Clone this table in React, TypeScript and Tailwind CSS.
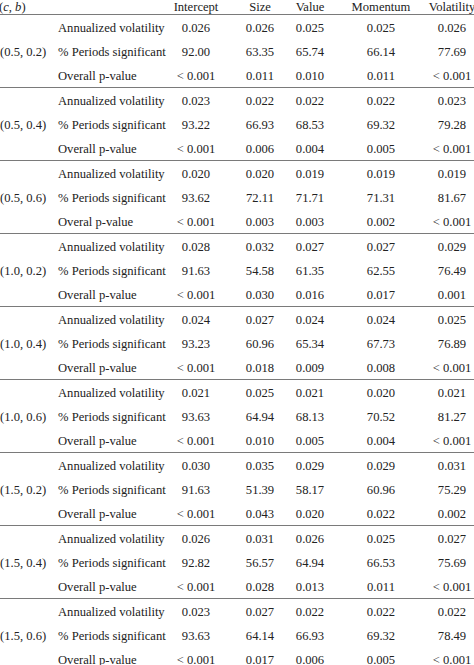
const cols = ['Intercept', 'Size', 'Value', 'Momentum', 'Volatility']

// widths chosen so each column's centre lines up with the printed table
const cellW = ['w-[52px]', 'w-[76px]', 'w-[24px]', 'w-[118px]', 'w-[24px]']

type Group = {
  c: string
  b: string
  vol: string[]
  sig: string[]
  p: string[]
  pLabel?: string
}

const groups: Group[] = [
  { c: '0.5', b: '0.2', vol: ['0.026', '0.026', '0.025', '0.025', '0.026'], sig: ['92.00', '63.35', '65.74', '66.14', '77.69'], p: ['< 0.001', '0.011', '0.010', '0.011', '< 0.001'] },
  { c: '0.5', b: '0.4', vol: ['0.023', '0.022', '0.022', '0.022', '0.023'], sig: ['93.22', '66.93', '68.53', '69.32', '79.28'], p: ['< 0.001', '0.006', '0.004', '0.005', '< 0.001'] },
  { c: '0.5', b: '0.6', vol: ['0.020', '0.020', '0.019', '0.019', '0.019'], sig: ['93.62', '72.11', '71.71', '71.31', '81.67'], p: ['< 0.001', '0.003', '0.003', '0.002', '< 0.001'], pLabel: 'Overal p-value' },
  { c: '1.0', b: '0.2', vol: ['0.028', '0.032', '0.027', '0.027', '0.029'], sig: ['91.63', '54.58', '61.35', '62.55', '76.49'], p: ['< 0.001', '0.030', '0.016', '0.017', '0.001'] },
  { c: '1.0', b: '0.4', vol: ['0.024', '0.027', '0.024', '0.024', '0.025'], sig: ['93.23', '60.96', '65.34', '67.73', '76.89'], p: ['< 0.001', '0.018', '0.009', '0.008', '< 0.001'] },
  { c: '1.0', b: '0.6', vol: ['0.021', '0.025', '0.021', '0.020', '0.021'], sig: ['93.63', '64.94', '68.13', '70.52', '81.27'], p: ['< 0.001', '0.010', '0.005', '0.004', '< 0.001'] },
  { c: '1.5', b: '0.2', vol: ['0.030', '0.035', '0.029', '0.029', '0.031'], sig: ['91.63', '51.39', '58.17', '60.96', '75.29'], p: ['< 0.001', '0.043', '0.020', '0.022', '0.002'] },
  { c: '1.5', b: '0.4', vol: ['0.026', '0.031', '0.026', '0.025', '0.027'], sig: ['92.82', '56.57', '64.94', '66.53', '75.69'], p: ['< 0.001', '0.028', '0.013', '0.011', '< 0.001'] },
  { c: '1.5', b: '0.6', vol: ['0.023', '0.027', '0.022', '0.022', '0.022'], sig: ['93.63', '64.14', '66.93', '69.32', '78.49'], p: ['< 0.001', '0.017', '0.006', '0.005', '< 0.001'] },
]

function Row({ head, label, values, h }: { head?: string; label: string; values: string[]; h: string }) {
  return (
    <div className={`flex items-center ${h}`}>
      <div className="w-[58px] shrink-0 whitespace-nowrap">{head}</div>
      <div className="w-[112px] shrink-0 whitespace-nowrap">{label}</div>
      {values.map((v, i) => (
        <div key={i} className={`${cellW[i]} flex shrink-0 justify-center whitespace-nowrap`}>
          {v}
        </div>
      ))}
    </div>
  )
}

export default function App() {
  return (
    <div
      className="h-[665px] w-[474px] overflow-hidden bg-white text-[12.6px] leading-[24px] text-[#222]"
      style={{ fontFamily: '"Liberation Serif", "Times New Roman", serif' }}
    >
      <div className="flex h-[15px] items-center border-b border-[#7a7a7a] leading-[14px]">
        <div className="-ml-[1px] w-[59px] shrink-0 whitespace-nowrap">
          (<i>c</i>, <i>b</i>)
        </div>
        <div className="w-[112px] shrink-0" />
        {cols.map((c, i) => (
          <div key={c} className={`${cellW[i]} flex shrink-0 justify-center whitespace-nowrap`}>
            {c}
          </div>
        ))}
      </div>

      {groups.map((g) => (
        <div key={g.c + g.b} className="border-b border-[#7a7a7a] pt-[1px]">
          <Row label="Annualized volatility" values={g.vol} h="h-[24px]" />
          <Row head={`(${g.c}, ${g.b})`} label="% Periods significant" values={g.sig} h="h-[24px]" />
          <Row label={g.pLabel ?? 'Overall p-value'} values={g.p} h="h-[23px]" />
        </div>
      ))}
    </div>
  )
}
